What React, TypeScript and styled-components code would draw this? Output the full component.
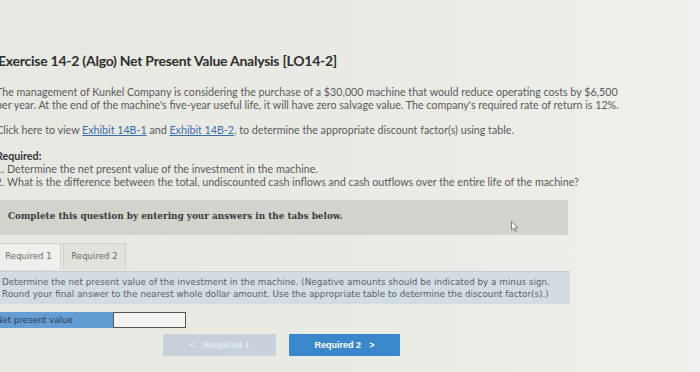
import React from 'react'
import styled, { createGlobalStyle } from 'styled-components'

const GlobalStyle = createGlobalStyle`
  html, body {
    margin: 0;
    padding: 0;
    width: 700px;
    height: 372px;
    overflow: hidden;
    background: linear-gradient(90deg, #e8e8e3 0%, #ebebe6 60%, #f0f0ec 100%);
  }
`;

const Page = styled.div`
  position: relative;
  width: 710px;
  height: 372px;
  margin-left: -4px;
  padding-top: 51px;
  box-sizing: border-box;
  font-family: Lato, "Open Sans", sans-serif;
`;

const Title = styled.h1`
  margin: 0;
  font-size: 14px;
  line-height: 19px;
  font-weight: 700;
  letter-spacing: -0.25px;
  color: #2e2e2e;
  padding-left: 2px;
`;

const Para = styled.p<{ $top: number }>`
  margin: ${p => p.$top}px 0 0;
  font-size: 10.7px;
  line-height: 12.5px;
  color: #5a5a5a;
`;

const Link = styled.a`
  color: #3a6ea8;
  text-decoration: underline;
`;

const ReqHeading = styled.div`
  margin-top: 12px;
  font-size: 10.7px;
  line-height: 13px;
  font-weight: 700;
  color: #333;
`;

const ReqList = styled.ol`
  margin: 0;
  padding-left: 11px;
  font-size: 10.7px;
  line-height: 13px;
  color: #5a5a5a;
`;

const Banner = styled.div`
  margin-top: 12px;
  width: 572px;
  height: 35px;
  display: flex;
  align-items: center;
  padding: 0 0 2px 12px;
  box-sizing: border-box;
  background: #d3d3ce;
  font-family: "DejaVu Serif", Georgia, serif;
  font-weight: 700;
  font-size: 8.9px;
  color: #3a3a3a;
`;

const Tabs = styled.div`
  margin-top: 8px;
  display: flex;
  gap: 2px;
  height: 26px;
`;

const Tab = styled.div<{ $active?: boolean }>`
  width: ${p => (p.$active ? 65 : 63)}px;
  display: flex;
  align-items: center;
  justify-content: center;
  box-sizing: border-box;
  border: 1px solid #cfcfca;
  border-bottom: none;
  background: ${p => (p.$active ? '#efefeb' : '#e2e2dd')};
  font-family: "DejaVu Sans", Verdana, sans-serif;
  font-size: 8.6px;
  color: #6a6a6a;
`;

const Instructions = styled.div`
  margin-top: 2px;
  width: 574px;
  height: 33px;
  box-sizing: border-box;
  padding: 4px 0 0 6px;
  background: #d3dde1;
  border-top: 1px solid #c2ccd0;
  font-family: "DejaVu Sans", Verdana, sans-serif;
  font-size: 8.8px;
  line-height: 12px;
  color: #5e5e6a;
`;

const InputRow = styled.div`
  margin-top: 8px;
  display: flex;
  height: 16px;
`;

const Label = styled.div`
  width: 117px;
  display: flex;
  align-items: center;
  box-sizing: border-box;
  background: #639dd3;
  font-family: "DejaVu Sans", Verdana, sans-serif;
  font-size: 8.6px;
  color: #2d3c55;
`;

const Field = styled.input`
  width: 73px;
  height: 16px;
  box-sizing: border-box;
  border: 1px solid #555;
  background: #f4f4f1;
  margin: 0;
  padding: 0;
`;

const Buttons = styled.div`
  margin-top: 6px;
  padding-left: 167px;
  display: flex;
  gap: 13px;
`;

const NavButton = styled.button<{ $disabled?: boolean }>`
  width: ${p => (p.$disabled ? 113 : 111)}px;
  height: 22px;
  border: none;
  border-radius: 1px;
  padding: 0;
  display: flex;
  align-items: center;
  justify-content: center;
  gap: 8px;
  background: ${p => (p.$disabled ? '#c7d1d9' : '#3b87cb')};
  color: ${p => (p.$disabled ? '#e4eaef' : '#ffffff')};
  font-family: Arial, "Liberation Sans", sans-serif;
  font-weight: 700;
  font-size: 9px;
`;

const Pointer = styled.svg`
  position: absolute;
  left: 515px;
  top: 221px;
`;

export default function App() {
  return (
    <Page>
      <GlobalStyle />
      <Title>Exercise 14-2 (Algo) Net Present Value Analysis [LO14-2]</Title>
      <Para $top={16}>
        The management of Kunkel Company is considering the purchase of a $30,000 machine that would reduce operating costs by $6,500
        <br />
        per year. At the end of the machine's five-year useful life, it will have zero salvage value. The company's required rate of return is 12%.
      </Para>
      <Para $top={13}>
        Click here to view <Link>Exhibit 14B-1</Link> and <Link>Exhibit 14B-2</Link>, to determine the appropriate discount factor(s) using table.
      </Para>
      <ReqHeading>Required:</ReqHeading>
      <ReqList>
        <li>Determine the net present value of the investment in the machine.</li>
        <li>What is the difference between the total, undiscounted cash inflows and cash outflows over the entire life of the machine?</li>
      </ReqList>
      <Banner>Complete this question by entering your answers in the tabs below.</Banner>
      <Tabs>
        <Tab $active>Required 1</Tab>
        <Tab>Required 2</Tab>
      </Tabs>
      <Instructions>
        Determine the net present value of the investment in the machine. (Negative amounts should be indicated by a minus sign.
        <br />
        Round your final answer to the nearest whole dollar amount. Use the appropriate table to determine the discount factor(s).)
      </Instructions>
      <InputRow>
        <Label>Net present value</Label>
        <Field />
      </InputRow>
      <Buttons>
        <NavButton $disabled>
          <span>&lt;</span>
          <span>Required 1</span>
        </NavButton>
        <NavButton>
          <span>Required 2</span>
          <span>&gt;</span>
        </NavButton>
      </Buttons>
      <Pointer width="8" height="11" viewBox="0 0 8 11">
        <path d="M0.5 0.5 L0.5 9 L2.6 7.2 L4 10.3 L5.3 9.7 L3.9 6.7 L6.8 6.6 Z" fill="#fff" stroke="#555" strokeWidth="0.7" />
      </Pointer>
    </Page>
  )
}
